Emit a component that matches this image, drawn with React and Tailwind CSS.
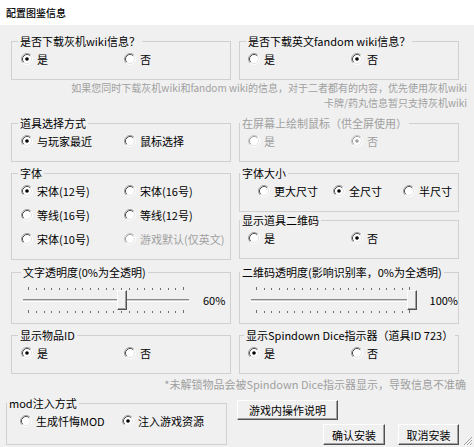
import React from 'react';

const Radio = ({ label, checked, disabled, w }) => (
  <div className={`flex items-center h-[18px] gap-[4px] shrink-0 ${disabled ? 'text-[#a0a0a0]' : 'text-black'}`} style={w ? { width: w } : undefined}>
    <svg width="12" height="12" viewBox="0 0 12 12" className="shrink-0">
      <circle cx="6" cy="6" r="5" fill="#ffffff" />
      <path d="M2.11 9.89 A5.5 5.5 0 0 1 9.89 2.11" stroke={disabled ? '#c8c8c8' : '#a0a0a0'} fill="none" />
      <path d="M9.89 2.11 A5.5 5.5 0 0 1 2.11 9.89" stroke="#ffffff" fill="none" />
      <path d="M2.82 9.18 A4.5 4.5 0 0 1 9.18 2.82" stroke={disabled ? '#a0a0a0' : '#505050'} fill="none" />
      <path d="M9.18 2.82 A4.5 4.5 0 0 1 2.82 9.18" stroke="#e3e3e3" fill="none" />
      {checked && <circle cx="6" cy="6" r="1.8" fill={disabled ? '#a0a0a0' : '#000000'} />}
    </svg>
    <span className="leading-[18px] whitespace-nowrap">{label}</span>
  </div>
);

const Group = ({ title, disabled, className = '', legendClass = 'ml-[6px]', children }) => (
  <fieldset className={`border border-[#d0d0d0] min-w-0 ${className}`}>
    <legend className={`px-[2px] h-4 leading-4 whitespace-nowrap ${legendClass} ${disabled ? 'text-[#a0a0a0]' : 'text-black'}`}>
      {title}
    </legend>
    {children}
  </fieldset>
);

const RadioRow = ({ items, pad = 'pl-[9px]' }) => (
  <div className={`flex pt-[1px] pb-[11px] ${pad}`}>
    {items.map((it, i) => (
      <Radio key={i} {...it} />
    ))}
  </div>
);

const Slider = ({ value }) => {
  const ticks = Array.from({ length: 21 });
  const TickRow = () => (
    <div className="flex justify-between items-end px-[5px] h-[3px]">
      {ticks.map((_, i) => (
        <div key={i} className={`w-px bg-[#6d6d6d] ${i === 0 || i === 20 ? 'h-[3px]' : 'h-[2px]'}`} />
      ))}
    </div>
  );
  return (
    <div className="flex items-center pt-[7px] pb-[10px]">
      <div className="ml-[11px] w-[166px]">
        <TickRow />
        <div className="relative h-[20px] flex items-center">
          <div className="w-full h-[3px] border-t border-[#8a8a8a] bg-[#d0d0d0] border-b border-b-white" />
          <div
            className="absolute top-0 w-[10px] h-[20px] bg-[#f0f0f0] border-l border-t border-l-white border-t-white border-r border-b border-r-[#505050] border-b-[#505050] shadow-[inset_-1px_-1px_#a0a0a0]"
            style={{ left: value * 1.56 }}
          />
        </div>
        <TickRow />
      </div>
      <div className="ml-[14px] leading-[14px]">{value}%</div>
    </div>
  );
};

const Button = ({ children, className = '' }) => (
  <button className={`flex items-center justify-center bg-[#f0f0f0] border border-t-white border-l-white border-r-[#505050] border-b-[#505050] shadow-[inset_-1px_-1px_#a0a0a0] leading-4 ${className}`}>
    {children}
  </button>
);

export default function App() {
  return (
    <div className="relative w-[474px] h-[447px] overflow-hidden bg-[#f0f0f0] text-[11px] text-black font-['Noto_Sans_CJK_SC','Noto_Sans',sans-serif]">
      {/* title */}
      <div className="h-[25px] bg-white pl-[6px] pt-[6px] text-[10px] leading-[14px] font-medium">配置图鉴信息</div>

      <div className="pt-[8px]">
        {/* row 1 */}
        <div className="grid grid-cols-[220px_220px] gap-x-[8px] pl-[11px]">
          <Group title="是否下载灰机wiki信息？">
            <RadioRow items={[{ label: '是', checked: true, w: 103 }, { label: '否' }]} />
          </Group>
          <Group title="是否下载英文fandom wiki信息？">
            <RadioRow pad="pl-[8px]" items={[{ label: '是', w: 103 }, { label: '否', checked: true }]} />
          </Group>
        </div>

        <div className="pr-[7px] text-right text-[#a0a0a0] text-[10px] leading-[15px]">
          <div>如果您同时下载灰机wiki和fandom wiki的信息，对于二者都有的内容，优先使用灰机wiki</div>
          <div>卡牌/药丸信息暂只支持灰机wiki</div>
        </div>

        {/* row 2 */}
        <div className="mt-[5px] grid grid-cols-[220px_220px] gap-x-[8px] pl-[11px]">
          <Group title="道具选择方式">
            <RadioRow items={[{ label: '与玩家最近', checked: true, w: 103 }, { label: '鼠标选择' }]} />
          </Group>
          <Group title="在屏幕上绘制鼠标（供全屏使用）" disabled legendClass="ml-0">
            <RadioRow pad="pl-[8px]" items={[{ label: '是', disabled: true, w: 103 }, { label: '否', checked: true, disabled: true }]} />
          </Group>
        </div>

        {/* row 3 */}
        <div className="mt-[3px] grid grid-cols-[220px_220px] gap-x-[8px] pl-[11px]">
          <Group title="字体">
            <div className="flex flex-col gap-[6px] pt-[1px] pb-[11px] pl-[9px]">
              <div className="flex">
                <Radio label="宋体(12号)" checked w={103} />
                <Radio label="宋体(16号)" />
              </div>
              <div className="flex">
                <Radio label="等线(16号)" w={103} />
                <Radio label="等线(12号)" />
              </div>
              <div className="flex">
                <Radio label="宋体(10号)" w={103} />
                <Radio label="游戏默认(仅英文)" disabled />
              </div>
            </div>
          </Group>
          <div className="flex flex-col">
            <Group title="字体大小" legendClass="ml-0">
              <RadioRow pad="pl-[18px]" items={[{ label: '更大尺寸', w: 75 }, { label: '全尺寸', checked: true, w: 70 }, { label: '半尺寸' }]} />
            </Group>
            <Group title="显示道具二维码" legendClass="ml-0">
              <RadioRow pad="pl-[8px]" items={[{ label: '是', w: 103 }, { label: '否', checked: true }]} />
            </Group>
          </div>
        </div>

        {/* row 4 */}
        <div className="mt-[4px] grid grid-cols-[220px_220px] gap-x-[8px] pl-[11px]">
          <Group title="文字透明度(0%为全透明)" legendClass="ml-[9px]">
            <Slider value={60} />
          </Group>
          <Group title="二维码透明度(影响识别率，0%为全透明)" legendClass="ml-0">
            <Slider value={100} />
          </Group>
        </div>

        {/* row 5 */}
        <div className="mt-[3px] grid grid-cols-[220px_220px] gap-x-[8px] pl-[11px]">
          <Group title="显示物品ID">
            <RadioRow items={[{ label: '是', checked: true, w: 103 }, { label: '否' }]} />
          </Group>
          <Group title="显示Spindown Dice指示器（道具ID 723）" legendClass="ml-[4px]">
            <RadioRow pad="pl-[8px]" items={[{ label: '是', checked: true, w: 103 }, { label: '否' }]} />
          </Group>
        </div>

        <div className="mt-[3px] pr-[8px] text-right text-[#a0a0a0] leading-[14px]">
          *未解锁物品会被Spindown Dice指示器显示，导致信息不准确
        </div>

        {/* row 6 */}
        <div className="mt-[4px] flex pl-[6px]">
          <Group title="mod注入方式" className="w-[221px]" legendClass="ml-0">
            <RadioRow pad="pl-[13px]" items={[{ label: '生成忏悔MOD', w: 102 }, { label: '注入游戏资源', checked: true }]} />
          </Group>
          <div className="ml-[10px] w-[223px] flex flex-col">
            <Button className="mt-[5px] w-[101px] h-[20px]">游戏内操作说明</Button>
            <div className="mt-[4px] flex justify-end gap-[13px] pr-[1px]">
              <Button className="w-[62px] h-[21px]">确认安装</Button>
              <Button className="w-[61px] h-[21px]">取消安装</Button>
            </div>
          </div>
        </div>
      </div>

      {/* resize grip */}
      <svg width="12" height="12" viewBox="0 0 12 12" className="absolute right-[1px] bottom-[1px]">
        <path d="M11 3 L3 11 M11 6 L6 11 M11 9 L9 11" stroke="#a0a0a0" strokeWidth="1" />
        <path d="M12 4 L4 12 M12 7 L7 12 M12 10 L10 12" stroke="#ffffff" strokeWidth="1" />
      </svg>
    </div>
  );
}
